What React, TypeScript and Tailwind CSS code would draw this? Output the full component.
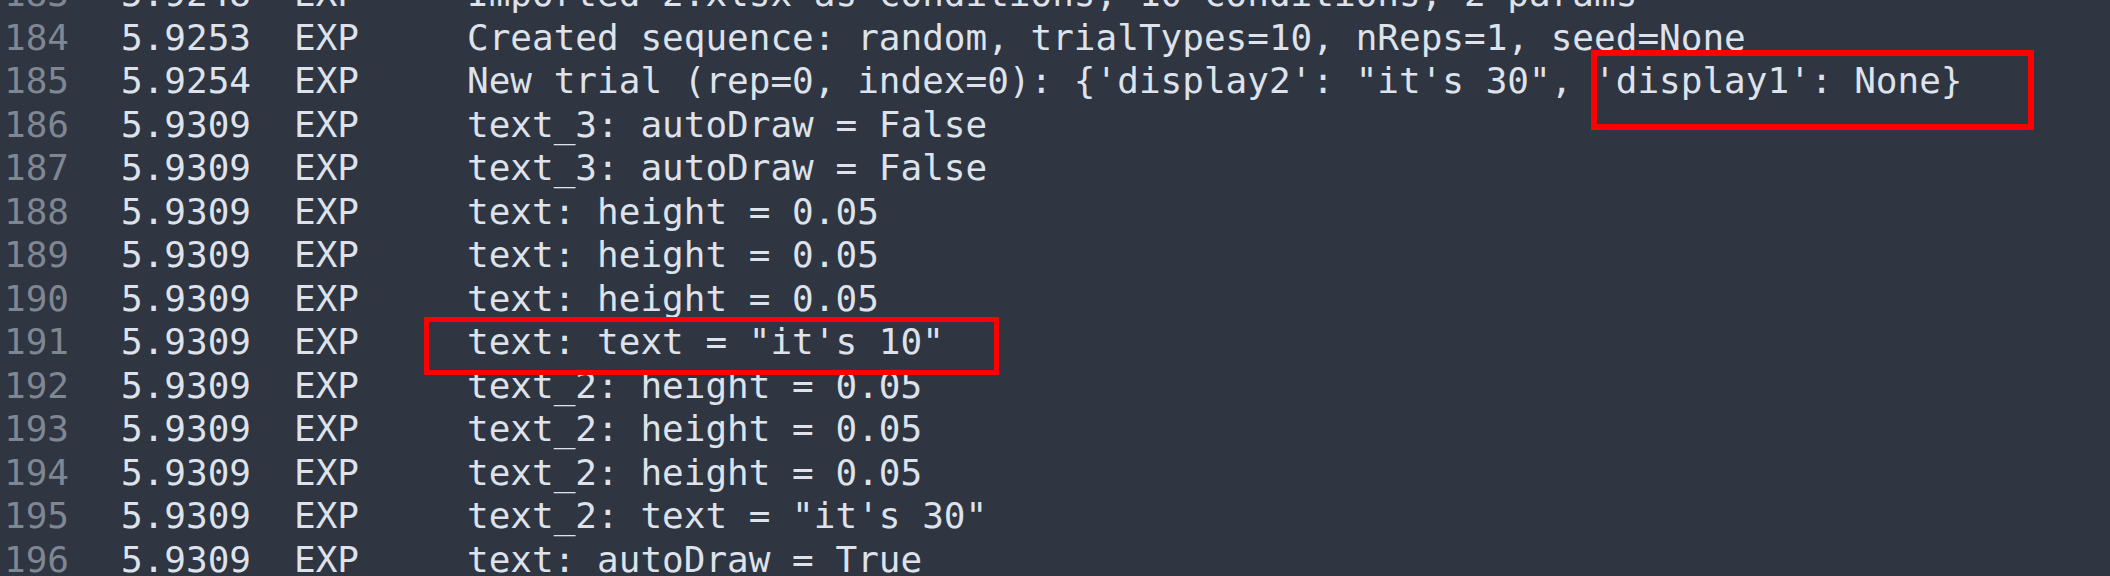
import React from 'react';

interface LogLine {
  num: number;
  time: string;
  level: string;
  msg: string;
}

const lines: LogLine[] = [
  { num: 183, time: '5.9248', level: 'EXP', msg: 'Imported 2.xlsx as conditions, 10 conditions, 2 params' },
  { num: 184, time: '5.9253', level: 'EXP', msg: 'Created sequence: random, trialTypes=10, nReps=1, seed=None' },
  { num: 185, time: '5.9254', level: 'EXP', msg: `New trial (rep=0, index=0): {'display2': "it's 30", 'display1': None}` },
  { num: 186, time: '5.9309', level: 'EXP', msg: 'text_3: autoDraw = False' },
  { num: 187, time: '5.9309', level: 'EXP', msg: 'text_3: autoDraw = False' },
  { num: 188, time: '5.9309', level: 'EXP', msg: 'text: height = 0.05' },
  { num: 189, time: '5.9309', level: 'EXP', msg: 'text: height = 0.05' },
  { num: 190, time: '5.9309', level: 'EXP', msg: 'text: height = 0.05' },
  { num: 191, time: '5.9309', level: 'EXP', msg: `text: text = "it's 10"` },
  { num: 192, time: '5.9309', level: 'EXP', msg: 'text_2: height = 0.05' },
  { num: 193, time: '5.9309', level: 'EXP', msg: 'text_2: height = 0.05' },
  { num: 194, time: '5.9309', level: 'EXP', msg: 'text_2: height = 0.05' },
  { num: 195, time: '5.9309', level: 'EXP', msg: `text_2: text = "it's 30"` },
  { num: 196, time: '5.9309', level: 'EXP', msg: 'text: autoDraw = True' },
];

const App: React.FC = () => {
  return (
    <div className="relative w-[2110px] h-[576px] overflow-hidden bg-[#2f3541] font-['DejaVu_Sans_Mono',monospace] text-[36px] leading-[43.5px]">
      <div className="-mt-[28px] flex flex-col">
        {lines.map((line) => (
          <div key={line.num} className="flex whitespace-pre">
            <span className="w-[121px] shrink-0 pl-[4px] text-[#7f8793]">{line.num}</span>
            <span className="w-[173px] shrink-0 text-[#dde2eb]">{line.time}</span>
            <span className="w-[173px] shrink-0 text-[#dde2eb]">{line.level}</span>
            <span className="text-[#dde2eb]">{line.msg}</span>
          </div>
        ))}
      </div>

      {/* highlight boxes */}
      <div className="absolute left-[1591px] top-[50px] w-[443px] h-[80px] border-[6px] border-[#ff0000]" />
      <div className="absolute left-[424px] top-[317px] w-[575px] h-[58px] border-[5px] border-[#ff0000]" />
    </div>
  );
};

export default App;
